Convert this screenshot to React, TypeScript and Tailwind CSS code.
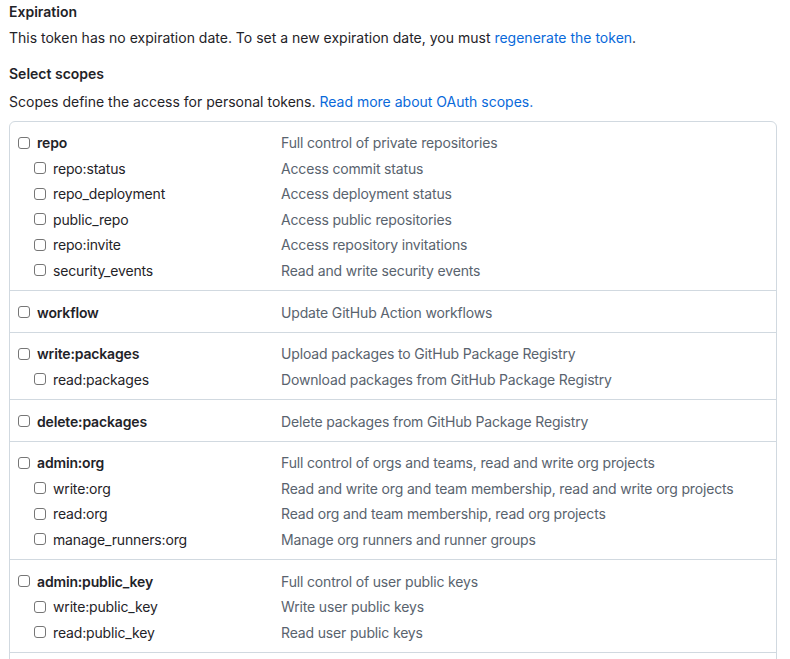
type Scope = { name: string; desc: string };
type Group = { main: Scope; subs: Scope[] };

const groups: Group[] = [
  {
    main: { name: "repo", desc: "Full control of private repositories" },
    subs: [
      { name: "repo:status", desc: "Access commit status" },
      { name: "repo_deployment", desc: "Access deployment status" },
      { name: "public_repo", desc: "Access public repositories" },
      { name: "repo:invite", desc: "Access repository invitations" },
      { name: "security_events", desc: "Read and write security events" },
    ],
  },
  { main: { name: "workflow", desc: "Update GitHub Action workflows" }, subs: [] },
  {
    main: { name: "write:packages", desc: "Upload packages to GitHub Package Registry" },
    subs: [{ name: "read:packages", desc: "Download packages from GitHub Package Registry" }],
  },
  { main: { name: "delete:packages", desc: "Delete packages from GitHub Package Registry" }, subs: [] },
  {
    main: { name: "admin:org", desc: "Full control of orgs and teams, read and write org projects" },
    subs: [
      { name: "write:org", desc: "Read and write org and team membership, read and write org projects" },
      { name: "read:org", desc: "Read org and team membership, read org projects" },
      { name: "manage_runners:org", desc: "Manage org runners and runner groups" },
    ],
  },
  {
    main: { name: "admin:public_key", desc: "Full control of user public keys" },
    subs: [
      { name: "write:public_key", desc: "Write user public keys" },
      { name: "read:public_key", desc: "Read user public keys" },
    ],
  },
];

function Box() {
  return <span className="inline-block w-[12px] h-[12px] shrink-0 rounded-[3px] border border-[#767676] bg-white" />;
}

function Row({ scope, sub }: { scope: Scope; sub?: boolean }) {
  return (
    <div className="flex items-center h-[25.5px]">
      <div className={`flex items-center w-[271px] ${sub ? "pl-[24px]" : "pl-[8px]"}`}>
        <Box />
        <span className={`ml-[7px] ${sub ? "" : "font-semibold"}`}>{scope.name}</span>
      </div>
      <span className="text-[#59636e]">{scope.desc}</span>
    </div>
  );
}

export default function App() {
  return (
    <main className="h-screen overflow-hidden bg-white text-[#1f2328] text-[14px] font-['Inter','Liberation_Sans',sans-serif] px-[9px] pt-[1px]">
      <h3 className="font-semibold leading-[21px]">Expiration</h3>
      <p className="mt-[5px] leading-[21px]">
        This token has no expiration date. To set a new expiration date, you must{" "}
        <a className="text-[#0969da]">regenerate the token</a>.
      </p>
      <h3 className="mt-[15px] font-semibold leading-[21px]">Select scopes</h3>
      <p className="mt-[7px] leading-[21px]">
        Scopes define the access for personal tokens.{" "}
        <a className="text-[#0969da]">Read more about OAuth scopes.</a>
      </p>
      <div className="mt-[9px] w-[768px] rounded-t-[6px] border border-[#d1d9e0] tracking-[-0.16px]">
        {groups.map((g, i) => (
          <div key={g.main.name} className={`pt-[8px] pb-[7.3px] ${i > 0 ? "border-t border-[#d1d9e0]" : ""}`}>
            <Row scope={g.main} />
            {g.subs.map((s) => (
              <Row key={s.name} scope={s} sub />
            ))}
          </div>
        ))}
        <div className="h-[40px] border-t border-[#d1d9e0]" />
      </div>
    </main>
  );
}
